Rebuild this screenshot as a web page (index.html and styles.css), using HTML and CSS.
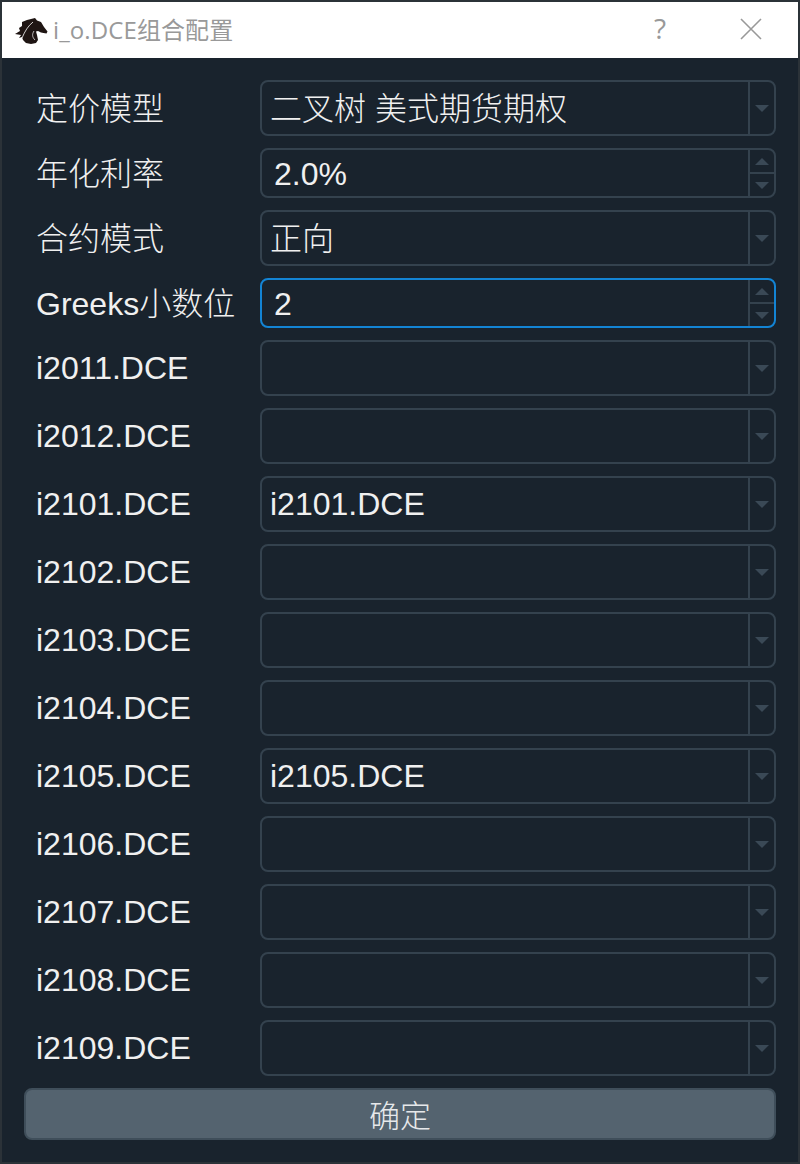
FILE: index.html
```html
<!DOCTYPE html>
<html lang="zh-CN">
<head>
    <meta charset="UTF-8">
    <meta name="viewport" content="width=device-width, initial-scale=1.0">
    <title>i_o.DCE组合配置</title>
    <link rel="stylesheet" href="styles.css">
</head>
<body>
    <div class="window">
        <div class="titlebar">
            <svg class="logo" width="34" height="28" viewBox="14 15 34 28">
                <path fill="#1f1513" d="M35 16 L37 18.5 L41 20 L44 25 L47.5 29.5 L46.5 31.5 L43.5 31 L41 30.5 L38 29 L36 29.5 L37 33 L38 38 L36 41 L31 42 L26 41 L23 38 L22 35 L19 36 L21 33 L15 32 L20 29 L19 26 L22 24 L22 20 L27 18 L31 17 Z"/>
                <path fill="none" stroke="#fff" stroke-width="0.8" d="M33 20 C28 24 25 29 22 36"/>
                <path fill="none" stroke="#fff" stroke-width="0.7" d="M34 29 C32 32 32 35 35 38"/>
            </svg>
            <span class="title">i_o.DCE组合配置</span>
            <span class="help">?</span>
            <svg class="close" width="22" height="22" viewBox="0 0 22 22">
                <path fill="none" stroke="#999" stroke-width="1.6" d="M1 1 L21 21 M21 1 L1 21"/>
            </svg>
        </div>

        <div class="form">
            <div class="row">
                <label class="label cjk">定价模型</label>
                <div class="field combo">
                    <span class="value cjk">二叉树 美式期货期权</span>
                    <div class="arrows"><i class="down"></i></div>
                </div>
            </div>
            <div class="row">
                <label class="label cjk">年化利率</label>
                <div class="field spin">
                    <span class="value">2.0%</span>
                    <div class="arrows"><div class="step"><i class="up"></i></div><div class="step"><i class="down"></i></div></div>
                </div>
            </div>
            <div class="row">
                <label class="label cjk">合约模式</label>
                <div class="field combo">
                    <span class="value cjk">正向</span>
                    <div class="arrows"><i class="down"></i></div>
                </div>
            </div>
            <div class="row">
                <label class="label cjk">Greeks小数位</label>
                <div class="field spin focus">
                    <span class="value">2</span>
                    <div class="arrows"><div class="step"><i class="up"></i></div><div class="step"><i class="down"></i></div></div>
                </div>
            </div>
            <div class="row">
                <label class="label">i2011.DCE</label>
                <div class="field combo"><span class="value"></span><div class="arrows"><i class="down"></i></div></div>
            </div>
            <div class="row">
                <label class="label">i2012.DCE</label>
                <div class="field combo"><span class="value"></span><div class="arrows"><i class="down"></i></div></div>
            </div>
            <div class="row">
                <label class="label">i2101.DCE</label>
                <div class="field combo"><span class="value">i2101.DCE</span><div class="arrows"><i class="down"></i></div></div>
            </div>
            <div class="row">
                <label class="label">i2102.DCE</label>
                <div class="field combo"><span class="value"></span><div class="arrows"><i class="down"></i></div></div>
            </div>
            <div class="row">
                <label class="label">i2103.DCE</label>
                <div class="field combo"><span class="value"></span><div class="arrows"><i class="down"></i></div></div>
            </div>
            <div class="row">
                <label class="label">i2104.DCE</label>
                <div class="field combo"><span class="value"></span><div class="arrows"><i class="down"></i></div></div>
            </div>
            <div class="row">
                <label class="label">i2105.DCE</label>
                <div class="field combo"><span class="value">i2105.DCE</span><div class="arrows"><i class="down"></i></div></div>
            </div>
            <div class="row">
                <label class="label">i2106.DCE</label>
                <div class="field combo"><span class="value"></span><div class="arrows"><i class="down"></i></div></div>
            </div>
            <div class="row">
                <label class="label">i2107.DCE</label>
                <div class="field combo"><span class="value"></span><div class="arrows"><i class="down"></i></div></div>
            </div>
            <div class="row">
                <label class="label">i2108.DCE</label>
                <div class="field combo"><span class="value"></span><div class="arrows"><i class="down"></i></div></div>
            </div>
            <div class="row">
                <label class="label">i2109.DCE</label>
                <div class="field combo"><span class="value"></span><div class="arrows"><i class="down"></i></div></div>
            </div>
            <button class="button">确定</button>
        </div>
    </div>
</body>
</html>
```
FILE: styles.css
```css
* {
    box-sizing: border-box;
}

body {
    margin: 0;
    font-family: "Liberation Sans", "Noto Sans CJK SC", sans-serif;
    background-color: #19232d;
}

.window {
    width: 800px;
    height: 1164px;
    border: 2px solid #2b3238;
    background-color: #19232d;
    color: #f0f0f0;
}

/* Title bar */
.titlebar {
    display: flex;
    align-items: center;
    height: 56px;
    background-color: #fff;
    padding-left: 12px;
}

.logo {
    flex: none;
    margin-top: 1px;
}

.title {
    margin-left: 5px;
    padding-bottom: 4px;
    font-family: "Open Sans", "Noto Sans CJK SC", sans-serif;
    font-size: 24px;
    letter-spacing: 0.1px;
    color: #999;
}

.help {
    margin-left: auto;
    padding-bottom: 4px;
    font-family: "Open Sans", sans-serif;
    font-size: 28px;
    color: #999;
}

.close {
    margin-left: 74px;
    margin-right: 36px;
    margin-bottom: 2px;
}

/* Form rows */
.form {
    display: flex;
    flex-direction: column;
    gap: 12px;
    padding: 22px;
}

.row {
    display: flex;
    align-items: center;
}

.label {
    flex: none;
    width: 236px;
    padding-left: 12px;
    font-size: 32px;
    font-weight: 300;
    white-space: nowrap;
}

.field {
    flex: 1;
    display: flex;
    align-items: center;
    border: 2px solid #34424e;
    border-radius: 8px;
    font-size: 32px;
    font-weight: 300;
}

.combo {
    height: 56px;
}

.spin {
    height: 50px;
}

.focus {
    border-color: #1384d4;
}

.value {
    flex: 1;
    padding-left: 8px;
    white-space: nowrap;
}

.spin .value {
    padding-left: 12px;
    padding-top: 2px;
}

/* CJK glyphs sit low in the line box */
.cjk {
    padding-bottom: 4px;
}

.arrows {
    flex: none;
    align-self: stretch;
    display: flex;
    flex-direction: column;
    align-items: center;
    justify-content: center;
    width: 26px;
    border-left: 2px solid #34424e;
}

.step {
    flex: 1;
    display: flex;
    align-items: center;
    justify-content: center;
    align-self: stretch;
}

.step + .step {
    border-top: 2px solid #34424e;
}

.arrows i {
    display: block;
    width: 0;
    height: 0;
    border-left: 7px solid transparent;
    border-right: 7px solid transparent;
}

.arrows .down {
    border-top: 7px solid #3a4956;
}

.arrows .up {
    border-bottom: 7px solid #3a4956;
}

.button {
    height: 52px;
    padding-bottom: 9px;
    border: 2px solid #3f4e5a;
    border-radius: 8px;
    background-color: #54636f;
    color: #e6e8ea;
    font-family: inherit;
    font-size: 31px;
    font-weight: 300;
}
```
